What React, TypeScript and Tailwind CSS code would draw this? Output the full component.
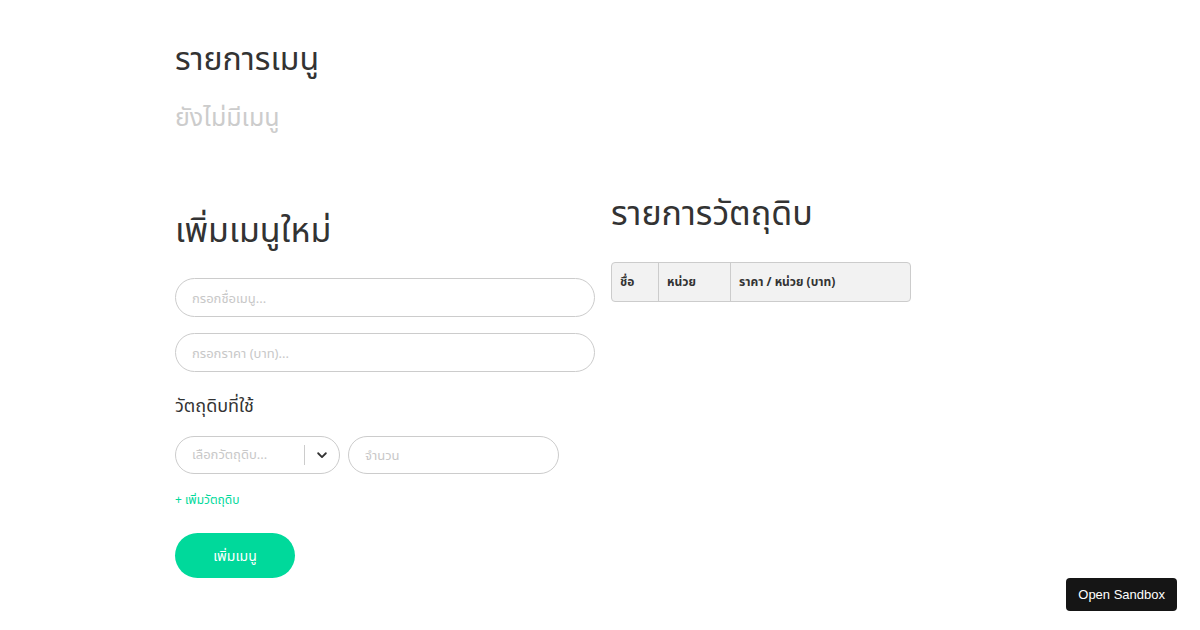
import React from 'react'

const font = { fontFamily: '"Noto Sans", "Noto Sans Thai", "Noto Sans CJK SC", sans-serif' }

function ChevronDown() {
  return (
    <svg width="14" height="14" viewBox="0 0 20 20" className="text-[#333]">
      <path d="M4.5 7.5 10 13l5.5-5.5" fill="none" stroke="currentColor" strokeWidth="2.6" strokeLinecap="round" strokeLinejoin="round" />
    </svg>
  )
}

export default function App() {
  return (
    <div className="relative min-h-[630px] w-full bg-white text-[#333]" style={font}>
      <div className="pl-[175px] pt-[34px]">
        {/* Menu list */}
        <h1 className="text-[32px] leading-[48px] text-[#333]">รายการเมนู</h1>
        <p className="mt-[16px] text-[25px] leading-[36px] text-[#cccccc]">ยังไม่มีเมนู</p>

        <div className="mt-[54px] flex gap-[16px]">
          {/* Left: new menu form */}
          <div className="w-[420px] pt-[16px]">
            <h2 className="text-[34px] leading-[50px] text-[#333]">เพิ่มเมนูใหม่</h2>
            <div className="mt-[24px] flex flex-col gap-[16px]">
              <input
                placeholder="กรอกชื่อเมนู..."
                className="h-[39px] w-full rounded-[20px] border border-[#cccccc] px-[16px] text-[13px] placeholder:text-[#c8c8c8] outline-none"
              />
              <input
                placeholder="กรอกราคา (บาท)..."
                className="h-[39px] w-full rounded-[20px] border border-[#cccccc] px-[16px] text-[13px] placeholder:text-[#c8c8c8] outline-none"
              />
            </div>
            <div className="mt-[20px] text-[18px] leading-[27px] text-[#333]">วัตถุดิบที่ใช้</div>
            <div className="mt-[17px] flex gap-[8px]">
              <div className="flex h-[38px] w-[165px] items-center rounded-[19px] border border-[#cccccc] pl-[16px] pr-[10px]">
                <span className="flex-1 text-[13px] text-[#c8c8c8]">เลือกวัตถุดิบ...</span>
                <span className="mr-[10px] h-[20px] w-px bg-[#cccccc]" />
                <ChevronDown />
              </div>
              <input
                placeholder="จำนวน"
                className="h-[38px] w-[211px] rounded-[19px] border border-[#cccccc] px-[16px] text-[13px] placeholder:text-[#c8c8c8] outline-none"
              />
            </div>
            <div className="mt-[17px] text-[12px] leading-[18px] text-[#00d99b]">+ เพิ่มวัตถุดิบ</div>
            <button className="mt-[24px] h-[45px] w-[120px] rounded-[23px] bg-[#00d99b] text-[14px] text-white">
              เพิ่มเมนู
            </button>
          </div>

          {/* Right: ingredients table */}
          <div className="w-[300px]">
            <h2 className="text-[34px] leading-[48px] text-[#333]">รายการวัตถุดิบ</h2>
            <div className="mt-[26px] overflow-hidden rounded-[4px] border border-[#cccccc] bg-[#f2f2f2]">
              <div className="flex h-[38px] items-center text-[12px] font-bold text-[#333]">
                <div className="flex h-full w-[47px] items-center border-r border-[#cccccc] pl-[8px]">ชื่อ</div>
                <div className="flex h-full w-[72px] items-center border-r border-[#cccccc] pl-[8px]">หน่วย</div>
                <div className="flex h-full flex-1 items-center pl-[8px]">ราคา / หน่วย (บาท)</div>
              </div>
            </div>
          </div>
        </div>
      </div>

      <button
        className="absolute bottom-[19px] right-[23px] h-[33px] rounded-[4px] bg-[#151515] px-[12px] text-[13px] text-white"
        style={{ fontFamily: '"Liberation Sans", Arial, sans-serif' }}
      >
        Open Sandbox
      </button>
    </div>
  )
}
